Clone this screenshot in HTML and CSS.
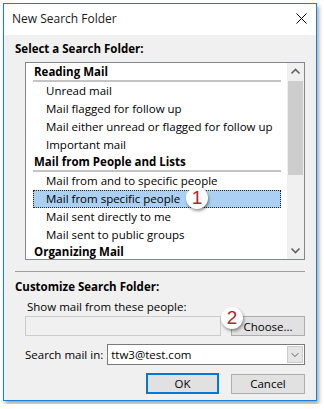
FILE: index.html
```html
<!DOCTYPE html>
<html lang="en">

<head>
    <meta charset="UTF-8">
    <title>New Search Folder</title>
    <link rel="stylesheet" href="styles.css">
</head>

<body>
    <div class="window">
        <div class="titlebar">
            <span class="titlebar__text">New Search Folder</span>
            <svg class="titlebar__close" width="11" height="11" viewBox="0 0 11 11">
                <path d="M0.5 0.5 L10.5 10.5 M10.5 0.5 L0.5 10.5" stroke="#000" stroke-width="1" fill="none" />
            </svg>
        </div>
        <div class="content">
            <div class="group-label">Select a Search Folder:</div>
            <div class="listbox">
                <div class="listbox__items">
                    <div class="row row--header">Reading Mail</div>
                    <div class="row">Unread mail</div>
                    <div class="row">Mail flagged for follow up</div>
                    <div class="row">Mail either unread or flagged for follow up</div>
                    <div class="row">Important mail</div>
                    <div class="row row--header">Mail from People and Lists</div>
                    <div class="row">Mail from and to specific people</div>
                    <div class="row row--selected">Mail from specific people</div>
                    <div class="row">Mail sent directly to me</div>
                    <div class="row">Mail sent to public groups</div>
                    <div class="row row--header">Organizing Mail</div>
                </div>
                <div class="scrollbar">
                    <svg class="scrollbar__arrow" width="17" height="17" viewBox="0 0 17 17">
                        <path d="M4.5 10.5 L8.5 6.5 L12.5 10.5" stroke="#606060" stroke-width="1.6" fill="none" />
                    </svg>
                    <div class="scrollbar__track">
                        <div class="scrollbar__thumb"></div>
                    </div>
                    <svg class="scrollbar__arrow" width="17" height="17" viewBox="0 0 17 17">
                        <path d="M4.5 6.5 L8.5 10.5 L12.5 6.5" stroke="#606060" stroke-width="1.6" fill="none" />
                    </svg>
                </div>
            </div>
            <div class="separator"></div>
            <div class="group-label group-label--second">Customize Search Folder:</div>
            <div class="field-label">Show mail from these people:</div>
            <div class="form-row">
                <div class="textbox"></div>
                <button class="btn">Choose...</button>
            </div>
            <div class="form-row form-row--search">
                <span class="search-label">Search mail in:</span>
                <div class="combo">
                    <span class="combo__value">ttw3@test.com</span>
                    <span class="combo__button">
                        <svg width="17" height="17" viewBox="0 0 17 17">
                            <path d="M4.5 7 L8.5 11 L12.5 7" stroke="#404040" stroke-width="1" fill="none" />
                        </svg>
                    </span>
                </div>
            </div>
            <div class="form-row form-row--actions">
                <button class="btn btn--default">OK</button>
                <button class="btn">Cancel</button>
            </div>
        </div>
        <span class="badge badge--one">1</span>
        <span class="badge badge--two">2</span>
    </div>
</body>
</html>
```

FILE: styles.css
```css
body {
    margin: 0;
    padding: 3px;
    background-color: #ffffff;
    font-family: 'Open Sans', 'Noto Sans', sans-serif;
    font-size: 11.5px;
    color: #000000;
}

.window {
    position: relative;
    width: 312px;
    height: 396px;
    border: 1px solid #1a7fd6;
    background-color: #f0f0f0;
    box-shadow: 2px 3px 4px rgba(0, 0, 0, 0.35);
}

.titlebar {
    display: flex;
    align-items: center;
    justify-content: space-between;
    height: 31px;
    padding: 0 9px 0 8px;
    background-color: #ffffff;
}

.titlebar__text {
    font-size: 12px;
    color: #1a1a1a;
    margin-top: -2px;
}

.titlebar__close {
    margin-top: -3px;
}

.content {
    padding: 6px 11px 0 11px;
}

.group-label {
    font-weight: bold;
    line-height: 16px;
}

.group-label--second {
    margin-top: 7px;
}

/* lista de pastas */
.listbox {
    display: flex;
    height: 196px;
    margin: 5px 0 0 10px;
    border: 1px solid #828790;
    background-color: #ffffff;
    overflow: hidden;
}

.listbox__items {
    flex: 1;
    padding: 1px 6px 0 7px;
}

.row {
    height: 18px;
    line-height: 18px;
    padding-left: 13px;
    white-space: nowrap;
    box-sizing: border-box;
}

.row--header {
    padding-left: 1px;
    font-weight: bold;
    line-height: 16px;
    border-bottom: 2px solid #c4c4c4;
}

.row--selected {
    background-color: #abd0f1;
    border: 1px dotted #222222;
    padding-left: 12px;
    line-height: 16px;
}

.scrollbar {
    display: flex;
    flex-direction: column;
    width: 17px;
    background-color: #f0f0f0;
}

.scrollbar__track {
    flex: 1;
    padding: 1px 1px 0 1px;
}

.scrollbar__thumb {
    height: 94px;
    background-color: #cdcdcd;
}

.separator {
    height: 1px;
    margin-top: 11px;
    background-color: #a0a0a0;
}

.field-label {
    margin-top: 4px;
    padding-left: 12px;
    line-height: 16px;
}

.form-row {
    display: flex;
    align-items: center;
    justify-content: flex-end;
    gap: 10px;
    margin-top: 1px;
    margin-left: 10px;
}

.textbox {
    flex: 1;
    height: 18px;
    border: 1px solid #cccccc;
    background-color: #f0f0f0;
}

.btn {
    width: 74px;
    height: 20px;
    padding: 0;
    font-family: inherit;
    font-size: 11.5px;
    color: #000000;
    background-color: #e1e1e1;
    border: 1px solid #adadad;
}

.btn--default {
    width: 73px;
    height: 21px;
    border: 2px solid #0078d7;
}

.form-row--search {
    margin-top: 8px;
    justify-content: flex-start;
    gap: 4px;
}

.form-row--actions {
    margin-top: 8px;
    gap: 12px;
}

.search-label {
    white-space: nowrap;
}

.combo {
    display: flex;
    align-items: center;
    flex: 1;
    height: 19px;
    border: 1px solid #7a7a7a;
    background-color: #ffffff;
}

.combo__value {
    flex: 1;
    padding-left: 3px;
}

.combo__button {
    display: flex;
    align-items: center;
    justify-content: center;
    width: 16px;
    height: 17px;
    margin-right: 1px;
    background-color: #e5e5e5;
    border: 1px solid #cccccc;
    box-sizing: border-box;
}

/* marcadores numerados */
.badge {
    position: absolute;
    width: 22px;
    height: 22px;
    border-radius: 50%;
    background-color: #ffffff;
    box-shadow: 1px 2px 3px rgba(0, 0, 0, 0.4);
    color: #b3262a;
    font-family: 'Liberation Sans', sans-serif;
    font-size: 19px;
    line-height: 22px;
    text-align: center;
}

.badge--one {
    left: 182px;
    top: 183px;
}

.badge--two {
    left: 217px;
    top: 303px;
}
```
